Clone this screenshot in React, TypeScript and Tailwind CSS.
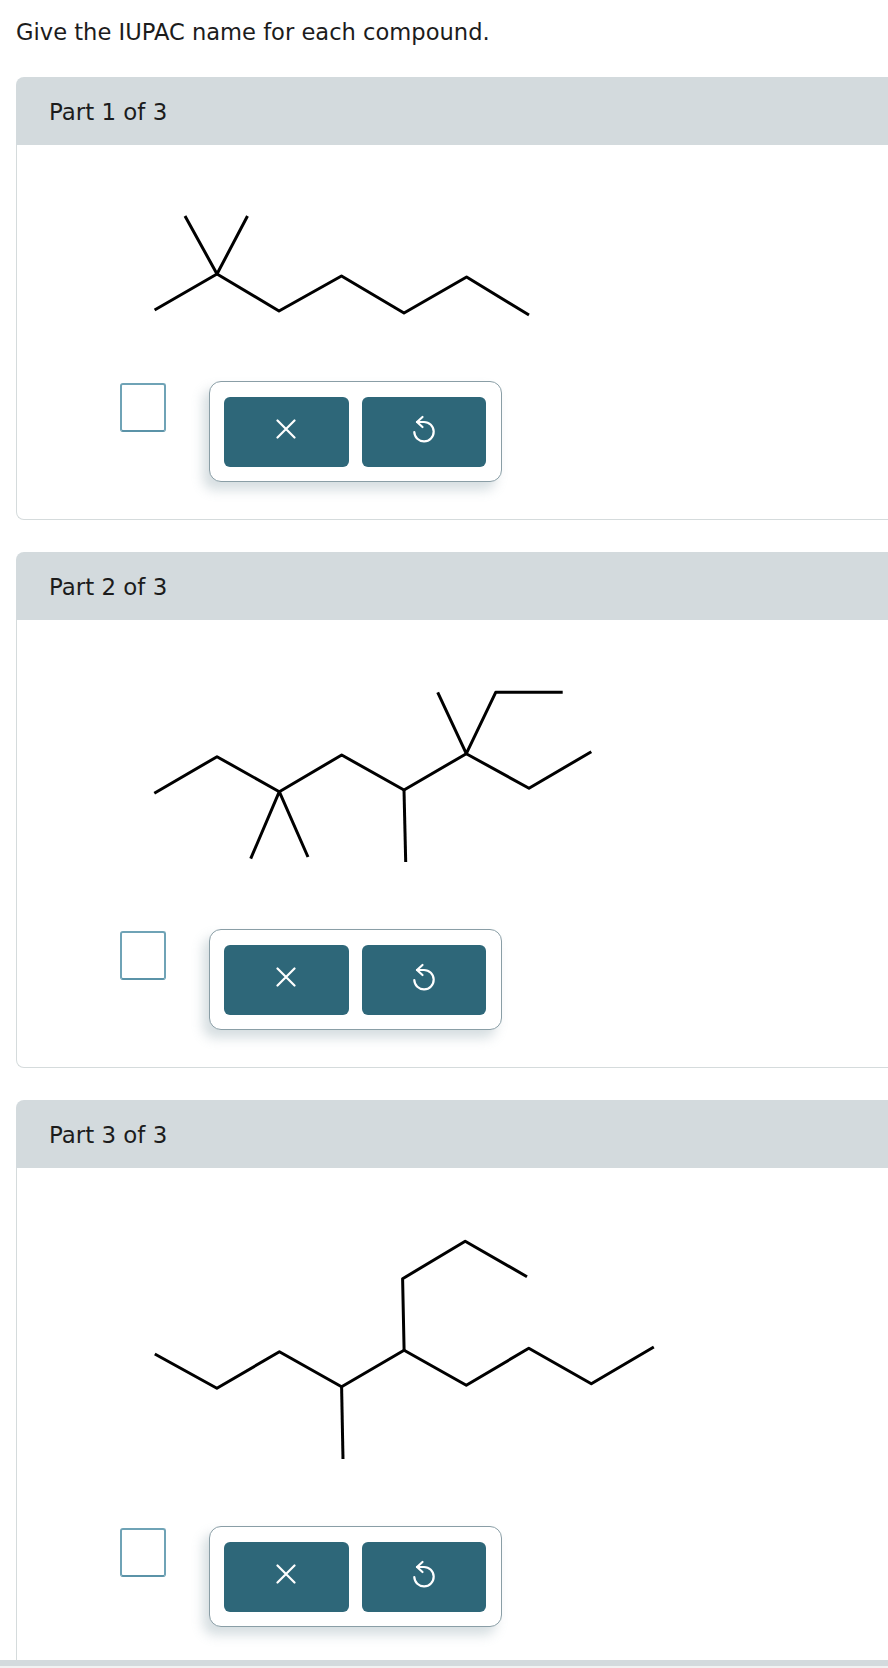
const FONT = "font-['DejaVu_Sans','Noto_Sans',sans-serif]";

type Mol = { top: number; height: number; lines: string[] };

const mols: Mol[] = [
  {
    top: 205,
    height: 120,
    lines: [
      "154.6,310 217,274 279,311 341.5,276 404,313 466.6,277 529,315",
      "185,216 217,274 247.5,216",
    ],
  },
  {
    top: 680,
    height: 193,
    lines: [
      "154.3,793.3 217,756.7 279.3,791.7 341.7,755 404,790 466.3,753.7 529,788.3 591.3,751.7",
      "250.7,858.7 279.3,791.7 308,857",
      "404,790 405.7,862",
      "437.7,692.3 466.3,753.7 495.7,692.3 562.7,692.3",
    ],
  },
  {
    top: 1228,
    height: 242,
    lines: [
      "154.8,1354 216.9,1388.3 279.4,1351.7 341.6,1386.7 404.1,1350.3 466.3,1385.3 528.8,1348.3 591.3,1383.7 653.8,1347",
      "341.6,1386.7 343,1459",
      "404.1,1350.3 402.6,1278.7 465.2,1241.3 527,1276.7",
    ],
  },
];

function Molecule({ mol }: { mol: Mol }) {
  return (
    <svg
      className="block ml-[20px]"
      width={540}
      height={mol.height}
      viewBox={`140 ${mol.top} 540 ${mol.height}`}
      fill="none"
      stroke="#000"
      strokeWidth={3}
      strokeLinejoin="round"
    >
      {mol.lines.map((p) => (
        <polyline key={p} points={p} />
      ))}
    </svg>
  );
}

function ToolButton({ wide, children }: { wide?: boolean; children: React.ReactNode }) {
  return (
    <button
      className={`${wide ? "w-[125px] pr-[2px] pb-[6px]" : "w-[124px] pb-[5px]"} h-[70px] rounded-[6px] bg-[#2e6779] flex items-center justify-center`}
    >
      {children}
    </button>
  );
}

function AnswerRow() {
  return (
    <div className="flex items-start mt-[56px]">
      <div className="w-[46px] h-[49px] mt-[2px] rounded-[3px] border-2 border-[#6fa3b6] border-b-[#5b93a8] bg-white" />
      <div className="ml-[43px] w-[293px] h-[101px] rounded-[12px] border border-[#8a9ea6] bg-white shadow-[-6px_8px_12px_rgba(120,145,155,0.3)] flex gap-[13px] pl-[14px] pt-[15px]">
        <ToolButton wide>
          <svg width="20" height="20" viewBox="0 0 20 20" fill="none" stroke="#fff" strokeWidth="2.2" strokeLinecap="round">
            <path d="M1.5 1.5 L18.5 18.5 M18.5 1.5 L1.5 18.5" />
          </svg>
        </ToolButton>
        <ToolButton>
          <svg width="24" height="30" viewBox="0 0 24 30" fill="none" stroke="#fff" strokeWidth="2.2" strokeLinecap="round" strokeLinejoin="round">
            <path d="M5 7 H12 A9.7 9.7 0 1 1 2.3 17" />
            <path d="M10.5 2 L5 7 L10.5 12" />
          </svg>
        </ToolButton>
      </div>
    </div>
  );
}

function Part({ n, mol, last }: { n: number; mol: Mol; last?: boolean }) {
  return (
    <section className={last ? "" : "mb-[32px]"}>
      <div className="h-[68px] bg-[#d3dadd] rounded-tl-[8px] pl-[33px] pt-[3px] flex items-center text-[22.9px] text-[#1c1c1c]">
        Part {n} of 3
      </div>
      <div
        className={`border-l border-[#d5dbdc] pl-[103px] pt-[60px] ${
          last ? "pb-[33px]" : "border-b rounded-bl-[8px] pb-[37px]"
        }`}
      >
        <Molecule mol={mol} />
        <AnswerRow />
      </div>
    </section>
  );
}

export default function App() {
  return (
    <div className={`w-[888px] h-[1668px] overflow-hidden bg-white ${FONT}`}>
      <div className="pl-4">
        <h1 className="h-[77px] pt-[17px] text-[22.6px] leading-[30px] font-normal text-[#1c1c1c]">
          Give the IUPAC name for each compound.
        </h1>
        <Part n={1} mol={mols[0]} />
        <Part n={2} mol={mols[1]} />
        <Part n={3} mol={mols[2]} last />
      </div>
      <div className="h-[6px] bg-[#d3dadd]" />
      <div className="h-[2px] bg-[#f2f2f2]" />
    </div>
  );
}
